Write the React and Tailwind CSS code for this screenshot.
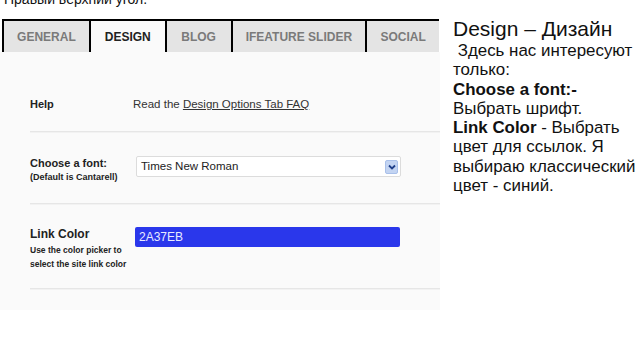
import React from "react";

const tabs = ["GENERAL", "DESIGN", "BLOG", "IFEATURE SLIDER", "SOCIAL"];
const tabWidths = ["w-[85px]", "w-[74px]", "w-[64px]", "w-[133px]", "w-[72px]"];

const Tabs = () => (
  <div className="flex items-stretch h-[33px] ml-[2px] border-t-2 border-black w-[437px]">
    <div className="w-[2px] bg-black" />
    {tabs.map((t, i) => (
      <React.Fragment key={t}>
        <div
          className={
            "flex items-center justify-center text-[12px] font-bold " +
            tabWidths[i] +
            (t === "DESIGN" ? " bg-[#fafafa] text-[#222]" : " bg-[#e4e4e4] text-[#7a7a7a]")
          }
        >
          {t}
        </div>
        {i < tabs.length - 1 && <div className="w-[2px] bg-black" />}
      </React.Fragment>
    ))}
  </div>
);

const Panel = () => (
  <div className="w-[440px] h-[258px] bg-[#fafafa] pl-[30px]">
    {/* Help */}
    <div className="h-[80px] pt-[45px] flex border-b border-[#e6e6e6] shadow-[0_1px_0_#f2f2f2]">
      <div className="w-[103px] text-[11px] font-bold text-[#222] leading-[14px]">Help</div>
      <div className="text-[11.5px] text-[#333] leading-[14px]">
        Read the <span className="underline">Design Options Tab FAQ</span>
      </div>
    </div>

    {/* Font */}
    <div className="h-[72px] pt-[24px] flex border-b border-[#e6e6e6] shadow-[0_1px_0_#f2f2f2]">
      <div className="w-[106px] text-[#222]">
        <div className="text-[11px] font-bold leading-[14px]">Choose a font:</div>
        <div className="text-[9px] font-bold leading-[12px] mt-[1px]">(Default is Cantarell)</div>
      </div>
      <div className="w-[265px] h-[21px] bg-white border border-[#dcdcdc] rounded-[2px] flex items-center justify-between pl-[4px] pr-[2px]">
        <span className="text-[11.5px] text-[#222]">Times New Roman</span>
        <span className="w-[13px] h-[14px] bg-[#c3d4f2] border border-[#a9c0ea] rounded-[2px] flex items-center justify-center">
          <svg width="8" height="6" viewBox="0 0 8 6">
            <path d="M1 1.5 L4 4.5 L7 1.5" fill="none" stroke="#1f3f8a" strokeWidth="1.8" />
          </svg>
        </span>
      </div>
    </div>

    {/* Link color */}
    <div className="h-[85px] pt-[23px] flex border-b border-[#e6e6e6] shadow-[0_1px_0_#f2f2f2]">
      <div className="w-[105px] text-[#222]">
        <div className="text-[12px] font-bold leading-[14px]">Link Color</div>
        <div className="text-[8.5px] font-bold leading-[14px] mt-[2px]">
          Use the color picker to
          <br />
          select the site link color
        </div>
      </div>
      <div className="w-[265px] h-[20px] bg-[#2a37eb] rounded-[2px] flex items-center pl-[4px] text-[12px] text-[#e8ebff]">
        2A37EB
      </div>
    </div>
  </div>
);

export default function App() {
  return (
    <div
      className="w-[640px] h-[360px] bg-white overflow-hidden flex"
      style={{ fontFamily: '"Liberation Sans", Arial, sans-serif' }}
    >
      <div className="w-[440px] flex flex-col">
        <div className="-mt-[9px] h-[28px] pl-[4px] text-[14px] leading-[16px] text-[#111]">
          Правый верхний угол.
        </div>
        <Tabs />
        <Panel />
      </div>
      <div className="pl-[13px] pt-[16px] text-[#111]">
        <div className="text-[21px] leading-[25px]">Design – Дизайн</div>
        <div className="text-[16.9px] leading-[19.3px]">
          <div>&nbsp;Здесь нас интересуют</div>
          <div>только:</div>
          <div className="font-bold">Choose a font:-</div>
          <div>Выбрать шрифт.</div>
          <div>
            <span className="font-bold">Link Color</span> - Выбрать
          </div>
          <div>цвет для ссылок. Я</div>
          <div>выбираю классический</div>
          <div>цвет - синий.</div>
        </div>
      </div>
    </div>
  );
}
